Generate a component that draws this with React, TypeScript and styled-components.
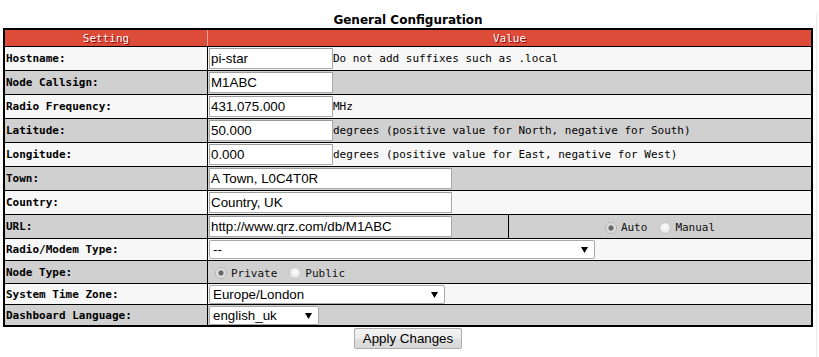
import React from 'react';
import styled, { createGlobalStyle, css } from 'styled-components';

const Global = createGlobalStyle`
  html, body { margin: 0; padding: 0; background: #ffffff; }
  body { font-family: "Liberation Sans", Arial, sans-serif; }
`;

const Page = styled.div`
  width: 810px;
  min-height: 357px;
  padding: 0 3px;
  border-right: 1px solid #ececec;
`;

const Title = styled.h2`
  margin: 13px 0 0;
  font: bold 12px/15px "DejaVu Sans", Verdana, sans-serif;
  text-align: center;
  color: #000;
`;

const Table = styled.div`
  border: 2px solid #000;
  background: #000;
  display: flex;
  flex-direction: column;
  gap: 1px;
`;

const Row = styled.div<{ $h: number; $head?: boolean }>`
  display: grid;
  grid-template-columns: 202px 1fr;
  column-gap: 1px;
  height: ${(p) => p.$h}px;
  background: ${(p) => (p.$head ? '#e0a39a' : '#000')};
`;

type Tone = 'head' | 'light' | 'dark';

const toneBg = (t: Tone) => (t === 'head' ? '#dd4b39' : t === 'light' ? '#f7f7f7' : '#d0d0d0');

const Cell = styled.div<{ $tone: Tone; $center?: boolean; $bold?: boolean }>`
  background: ${(p) => toneBg(p.$tone)};
  display: flex;
  align-items: center;
  justify-content: ${(p) => (p.$center ? 'center' : 'flex-start')};
  padding: 0 1px;
  min-width: 0;
  font-family: "DejaVu Sans Mono", "Liberation Mono", monospace;
  font-size: 11px;
  font-weight: ${(p) => (p.$bold ? 'bold' : 'normal')};
  color: #000;
  white-space: nowrap;
  ${(p) =>
    p.$tone === 'head' &&
    css`
      color: #fff;
      text-shadow: 1px 1px #8b0000;
    `}
`;

const Split = styled.div`
  display: grid;
  grid-template-columns: 300px 1fr;
  column-gap: 1px;
  background: #000;
`;

const TextInput = styled.input<{ $w: number }>`
  width: ${(p) => p.$w}px;
  height: 21px;
  box-sizing: border-box;
  margin: 0;
  padding: 0 1px;
  border: 1px solid #a9a9a9;
  border-top-color: #9c9c9c;
  background: #fff;
  color: #000;
  font: 13.33px "Liberation Sans", Arial, sans-serif;
  outline: none;
`;

const SelectWrap = styled.div<{ $w: number }>`
  position: relative;
  width: ${(p) => p.$w}px;
  height: 19px;
`;

const Select = styled.select`
  appearance: none;
  width: 100%;
  height: 100%;
  box-sizing: border-box;
  margin: 0;
  padding: 0 0 0 3px;
  border: 1px solid #a9a9a9;
  border-radius: 2px;
  background: #fff;
  color: #000;
  font: 13.33px "Liberation Sans", Arial, sans-serif;
  outline: none;
`;

const Arrow = styled.svg`
  position: absolute;
  right: 7px;
  top: 7px;
  pointer-events: none;
`;

const RadioGroup = styled.div<{ $center?: boolean }>`
  display: flex;
  align-items: center;
  width: 100%;
  justify-content: ${(p) => (p.$center ? 'center' : 'flex-start')};
  padding-top: 2px;
`;

const Radio = styled.input`
  appearance: none;
  width: 12px;
  height: 12px;
  margin: 0 4px 0 6px;
  border-radius: 50%;
  border: 1px solid #c4c4c4;
  box-sizing: border-box;
  background: radial-gradient(circle at 50% 40%, #ffffff 0, #ececec 55%, #d8d8d8 100%);
  &:checked {
    border-color: #b0b0b0;
    background: radial-gradient(circle, #606060 0, #6a6a6a 2px, #cfcfcf 3px, #ececec 5px);
  }
`;

const RadioLabel = styled.span`
  font-family: "DejaVu Sans Mono", "Liberation Mono", monospace;
  font-size: 11px;
  color: #111;
  margin-right: 6px;
`;

const ApplyButton = styled.button`
  display: block;
  margin: 1px auto 0;
  height: 21px;
  padding: 0 8px;
  border: 1px solid #adadad;
  border-radius: 2px;
  background: linear-gradient(#f3f3f3, #ebebeb 50%, #dedede 51%, #d9d9d9);
  color: #000;
  font: 13.33px "Liberation Sans", Arial, sans-serif;
`;

const SelectBox = ({ w, value }: { w: number; value: string }) => (
  <SelectWrap $w={w}>
    <Select defaultValue={value}>
      <option>{value}</option>
    </Select>
    <Arrow width="7" height="6" viewBox="0 0 7 6">
      <polygon points="0,0 7,0 3.5,6" fill="#000" />
    </Arrow>
  </SelectWrap>
);

type RowDef = {
  label: string;
  h: number;
  content: React.ReactNode;
};

const rows: RowDef[] = [
  {
    label: 'Hostname:',
    h: 23,
    content: (
      <>
        <TextInput $w={124} defaultValue="pi-star" />
        Do not add suffixes such as .local
      </>
    ),
  },
  { label: 'Node Callsign:', h: 23, content: <TextInput $w={124} defaultValue="M1ABC" /> },
  {
    label: 'Radio Frequency:',
    h: 23,
    content: (
      <>
        <TextInput $w={124} defaultValue="431.075.000" />
        MHz
      </>
    ),
  },
  {
    label: 'Latitude:',
    h: 23,
    content: (
      <>
        <TextInput $w={124} defaultValue="50.000" />
        degrees (positive value for North, negative for South)
      </>
    ),
  },
  {
    label: 'Longitude:',
    h: 23,
    content: (
      <>
        <TextInput $w={124} defaultValue="0.000" />
        degrees (positive value for East, negative for West)
      </>
    ),
  },
  { label: 'Town:', h: 23, content: <TextInput $w={243} defaultValue="A Town, L0C4T0R" /> },
  { label: 'Country:', h: 23, content: <TextInput $w={243} defaultValue="Country, UK" /> },
  { label: 'URL:', h: 23, content: null },
  { label: 'Radio/Modem Type:', h: 21, content: <SelectBox w={386} value="--" /> },
  {
    label: 'Node Type:',
    h: 22,
    content: (
      <RadioGroup>
        <Radio type="radio" name="nodetype" defaultChecked />
        <RadioLabel>Private</RadioLabel>
        <Radio type="radio" name="nodetype" />
        <RadioLabel>Public</RadioLabel>
      </RadioGroup>
    ),
  },
  { label: 'System Time Zone:', h: 20, content: <SelectBox w={236} value="Europe/London" /> },
  { label: 'Dashboard Language:', h: 20, content: <SelectBox w={110} value="english_uk" /> },
];

export default function App() {
  return (
    <Page>
      <Global />
      <Title>General Configuration</Title>
      <Table>
        <Row $h={16} $head>
          <Cell $tone="head" $center>
            Setting
          </Cell>
          <Cell $tone="head" $center>
            Value
          </Cell>
        </Row>
        {rows.map((r, i) => {
          const tone: Tone = i % 2 === 0 ? 'light' : 'dark';
          return (
            <Row key={r.label} $h={r.h}>
              <Cell $tone={tone} $bold>
                {r.label}
              </Cell>
              {r.label === 'URL:' ? (
                <Split>
                  <Cell $tone={tone}>
                    <TextInput $w={243} defaultValue="http://www.qrz.com/db/M1ABC" />
                  </Cell>
                  <Cell $tone={tone}>
                    <RadioGroup $center>
                      <Radio type="radio" name="urlmode" defaultChecked />
                      <RadioLabel>Auto</RadioLabel>
                      <Radio type="radio" name="urlmode" />
                      <RadioLabel>Manual</RadioLabel>
                    </RadioGroup>
                  </Cell>
                </Split>
              ) : (
                <Cell $tone={tone}>{r.content}</Cell>
              )}
            </Row>
          );
        })}
      </Table>
      <ApplyButton type="button">Apply Changes</ApplyButton>
    </Page>
  );
}
